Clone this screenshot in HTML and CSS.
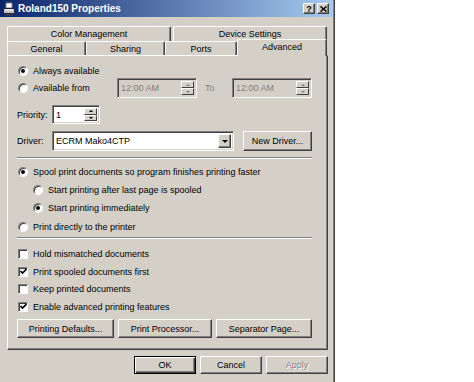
FILE: index.html
```html
<!DOCTYPE html>
<html lang="en">
<head>
  <meta charset="UTF-8">
  <meta name="viewport" content="width=device-width, initial-scale=1.0">
  <title>Roland150 Properties</title>
  <link rel="stylesheet" href="styles.css">
</head>
<body>

<div class="window">
  <div class="titlebar">
    <svg class="app-icon" width="14" height="14" viewBox="0 0 14 14">
      <path d="M4 1 L10 1 L10 6 L4 6 Z" fill="#fff" stroke="#808080" stroke-width="1"/>
      <path d="M1.5 6.5 L12.5 6.5 L12.5 11.5 L1.5 11.5 Z" fill="#c0c0c0" stroke="#202040" stroke-width="1"/>
      <path d="M3 12 L11 12 L11 13.5 L3 13.5 Z" fill="#404040"/>
      <path d="M3 8 L11 8" stroke="#fff" stroke-width="1"/>
    </svg>
    <span class="title">Roland150 Properties</span>
    <div class="caption-buttons">
      <span class="caption-btn">?</span>
      <span class="caption-btn">
        <svg width="7" height="6" viewBox="0 0 7 6"><path d="M0.5 0.5 L6.5 5.5 M6.5 0.5 L0.5 5.5" stroke="#000" stroke-width="1.5"/></svg>
      </span>
    </div>
  </div>

  <div class="dialog">
    <div class="tabs">
      <div class="tab-row back-row">
        <div class="tab tab-color">Color Management</div>
        <div class="tab tab-device">Device Settings</div>
      </div>
      <div class="tab-row front-row">
        <div class="tab tab-general">General</div>
        <div class="tab tab-sharing">Sharing</div>
        <div class="tab tab-ports">Ports</div>
        <div class="tab tab-advanced active">Advanced</div>
      </div>
    </div>

    <div class="panel">
      <div class="row row-always">
        <span class="radio checked"></span>
        <span>Always available</span>
      </div>

      <div class="row row-from">
        <div class="from-label">
          <span class="radio"></span>
          <span>Available from</span>
        </div>
        <div class="field time disabled">
          <span class="field-text">12:00 AM</span>
          <span class="spinner"><span class="spin up"></span><span class="spin down"></span></span>
        </div>
        <span class="to-label">To</span>
        <div class="field time disabled">
          <span class="field-text">12:00 AM</span>
          <span class="spinner"><span class="spin up"></span><span class="spin down"></span></span>
        </div>
      </div>

      <div class="row row-priority">
        <span class="field-label">Priority:</span>
        <div class="field priority">
          <span class="field-text">1</span>
          <span class="spinner"><span class="spin up"></span><span class="spin down"></span></span>
        </div>
      </div>

      <div class="row row-driver">
        <span class="field-label">Driver:</span>
        <div class="field combo">
          <span class="field-text">ECRM Mako4CTP</span>
          <span class="combo-btn"><span class="arrow-down"></span></span>
        </div>
        <button class="btn new-driver">New Driver...</button>
      </div>

      <div class="separator sep-top"></div>

      <div class="row spool">
        <span class="radio checked"></span>
        <span>Spool print documents so program finishes printing faster</span>
      </div>
      <div class="row spool sub">
        <span class="radio"></span>
        <span>Start printing after last page is spooled</span>
      </div>
      <div class="row spool sub">
        <span class="radio checked"></span>
        <span>Start printing immediately</span>
      </div>
      <div class="row spool direct">
        <span class="radio"></span>
        <span>Print directly to the printer</span>
      </div>

      <div class="separator sep-bottom"></div>

      <div class="checks">
        <div class="row check-row">
          <span class="checkbox"></span>
          <span>Hold mismatched documents</span>
        </div>
        <div class="row check-row">
          <span class="checkbox checked">
            <svg width="7" height="7" viewBox="0 0 7 7"><path d="M0.5 3 L2.5 5 L6.5 1" fill="none" stroke="#000" stroke-width="1.6"/></svg>
          </span>
          <span>Print spooled documents first</span>
        </div>
        <div class="row check-row">
          <span class="checkbox"></span>
          <span>Keep printed documents</span>
        </div>
        <div class="row check-row">
          <span class="checkbox checked">
            <svg width="7" height="7" viewBox="0 0 7 7"><path d="M0.5 3 L2.5 5 L6.5 1" fill="none" stroke="#000" stroke-width="1.6"/></svg>
          </span>
          <span>Enable advanced printing features</span>
        </div>
      </div>

      <div class="panel-buttons">
        <button class="btn btn-defaults">Printing Defaults...</button>
        <button class="btn btn-processor">Print Processor...</button>
        <button class="btn btn-separator">Separator Page...</button>
      </div>
    </div>

    <div class="footer">
      <button class="btn btn-footer default">OK</button>
      <button class="btn btn-footer">Cancel</button>
      <button class="btn btn-footer" disabled>Apply</button>
    </div>
  </div>
</div>

</body>
</html>
```

FILE: styles.css
```css
body {
  margin: 0;
  overflow: hidden;
  background-color: #fff;
  font-family: 'Liberation Sans', Arial, sans-serif;
  font-size: 9px;
  color: #000;
}

.window {
  width: 335px;
  height: 382px;
  box-sizing: border-box;
  background-color: #d4d0c8;
  border-right: 1px solid #404040;
  box-shadow: inset -1px 0 0 #808080;
}

/* title bar */
.titlebar {
  height: 17px;
  width: 333px;
  display: flex;
  align-items: center;
  background: linear-gradient(to right, #0a246a, #a6caf0);
  color: #fff;
}

.app-icon {
  margin-left: 2px;
  margin-right: 2px;
  flex: none;
}

.title {
  font-weight: bold;
  font-size: 10px;
  flex: 1;
}

.caption-buttons {
  display: flex;
  gap: 2px;
  margin-right: 4px;
}

.caption-btn {
  width: 12px;
  height: 11px;
  box-sizing: border-box;
  display: flex;
  align-items: center;
  justify-content: center;
  background-color: #d4d0c8;
  color: #000;
  font-weight: bold;
  font-size: 9px;
  border: 1px solid;
  border-color: #fff #404040 #404040 #fff;
  box-shadow: inset -1px -1px 0 #808080;
}

/* dialog */
.dialog {
  padding-left: 7px;
}

.tabs {
  width: 321px;
  padding-top: 9px;
}

.tab-row {
  display: flex;
  align-items: flex-start;
}

.back-row {
  height: 15px;
  gap: 2px;
}

.front-row {
  height: 14px;
}

.tab {
  box-sizing: border-box;
  display: flex;
  justify-content: center;
  align-items: center;
  background-color: #d4d0c8;
  border-top: 1px solid #fff;
  border-left: 1px solid #fff;
  border-right: 1px solid #404040;
  box-shadow: inset -1px 0 0 #808080;
  border-radius: 2px 2px 0 0;
}

.back-row .tab {
  height: 15px;
}

.front-row .tab {
  height: 14px;
  padding-top: 1px;
}

.tab-color { width: 164px; }
.tab-device { width: 154px; }
.tab-general { width: 79px; }
.tab-sharing { width: 79px; }
.tab-ports { width: 72px; }

.tab-advanced {
  width: 90px;
}

.front-row .tab.active {
  height: 17px;
  margin-top: -2px;
  padding-top: 0;
  padding-bottom: 3px;
  position: relative;
  z-index: 1;
}

.panel {
  width: 321px;
  height: 295px;
  box-sizing: border-box;
  border-top: 1px solid #fff;
  border-left: 1px solid #fff;
  border-right: 1px solid #404040;
  border-bottom: 1px solid #404040;
  box-shadow: inset -1px -1px 0 #808080;
  padding: 7px 0 0 9px;
}

.row {
  display: flex;
  align-items: center;
  white-space: nowrap;
}

.row-always {
  height: 15px;
}

.row-from {
  height: 20px;
}

.from-label {
  width: 100px;
  display: flex;
  align-items: center;
}

.to-label {
  width: 27px;
  margin-left: 8px;
  color: #808080;
}

.row-priority {
  height: 19px;
  margin-top: 7px;
}

.row-driver {
  height: 20px;
  margin-top: 7px;
}

.field-label {
  width: 35px;
}

/* radio and checkbox */
.radio {
  width: 10px;
  height: 10px;
  box-sizing: border-box;
  margin-left: 1px;
  margin-right: 5px;
  border-radius: 50%;
  background-color: #fff;
  border: 1px solid;
  border-color: #808080 #fff #fff #808080;
  box-shadow: inset 1px 1px 0 #404040;
  display: flex;
  align-items: center;
  justify-content: center;
  flex: none;
}

.radio.checked::after {
  content: "";
  width: 4px;
  height: 4px;
  border-radius: 50%;
  background-color: #000;
}

.checkbox {
  width: 10px;
  height: 10px;
  box-sizing: border-box;
  margin-left: 1px;
  margin-right: 5px;
  background-color: #fff;
  border: 1px solid;
  border-color: #808080 #fff #fff #808080;
  box-shadow: inset 1px 1px 0 #404040;
  display: flex;
  align-items: center;
  justify-content: center;
  flex: none;
}

/* edit fields */
.field {
  height: 100%;
  box-sizing: border-box;
  display: flex;
  align-items: center;
  background-color: #fff;
  border: 1px solid;
  border-color: #808080 #fff #fff #808080;
  box-shadow: inset 1px 1px 0 #404040, inset -1px -1px 0 #d4d0c8;
  padding: 2px 2px 2px 3px;
}

.field-text {
  flex: 1;
}

.field.disabled {
  background-color: #d4d0c8;
  color: #808080;
}

.time {
  width: 80px;
}

.priority {
  width: 48px;
}

.combo {
  width: 182px;
}

.spinner {
  width: 13px;
  height: 100%;
  display: flex;
  flex-direction: column;
}

.spin {
  flex: 1;
  box-sizing: border-box;
  background-color: #d4d0c8;
  border: 1px solid;
  border-color: #fff #404040 #404040 #fff;
  display: flex;
  align-items: center;
  justify-content: center;
}

.spin::after {
  content: "";
  border-left: 2px solid transparent;
  border-right: 2px solid transparent;
}

.spin.up::after {
  border-bottom: 2px solid #000;
}

.spin.down::after {
  border-top: 2px solid #000;
}

.disabled .spin::after {
  border-top-color: #808080;
  border-bottom-color: #808080;
}

.disabled .spin.up::after {
  border-top-color: transparent;
}

.disabled .spin.down::after {
  border-bottom-color: transparent;
}

.combo-btn {
  width: 13px;
  height: 100%;
  box-sizing: border-box;
  background-color: #d4d0c8;
  border: 1px solid;
  border-color: #fff #404040 #404040 #fff;
  box-shadow: inset -1px -1px 0 #808080;
  display: flex;
  align-items: center;
  justify-content: center;
}

.arrow-down {
  border-left: 3px solid transparent;
  border-right: 3px solid transparent;
  border-top: 3px solid #000;
}

/* buttons */
.btn {
  font-family: inherit;
  font-size: 9px;
  color: #000;
  background-color: #d4d0c8;
  box-sizing: border-box;
  padding: 0;
  border: 1px solid;
  border-color: #fff #404040 #404040 #fff;
  box-shadow: inset -1px -1px 0 #808080;
  border-radius: 0;
}

.btn:disabled {
  color: #808080;
  text-shadow: 1px 1px 0 #fff;
}

.new-driver {
  width: 69px;
  height: 20px;
  margin-left: 9px;
}

.separator {
  width: 295px;
  height: 2px;
  box-sizing: border-box;
  border-top: 1px solid #808080;
  border-bottom: 1px solid #fff;
}

.sep-top {
  margin-top: 6px;
}

.sep-bottom {
  margin-top: 1px;
}

.spool {
  height: 18px;
}

.spool:first-of-type {
  margin-top: 4px;
}

.sep-top + .spool {
  margin-top: 4px;
}

.spool.sub {
  padding-left: 15px;
}

.spool.direct {
  margin-top: 1px;
}

.checks {
  margin-top: 6.5px;
}

.check-row {
  height: 17.5px;
}

.panel-buttons {
  display: flex;
  margin-top: 3.5px;
}

.panel-buttons .btn {
  height: 19px;
}

.btn-defaults { width: 97px; }
.btn-processor { width: 94px; margin-left: 4px; }
.btn-separator { width: 96px; margin-left: 4px; }

.footer {
  width: 321px;
  display: flex;
  justify-content: flex-end;
  gap: 4px;
  margin-top: 6px;
}

.btn-footer {
  width: 62px;
  height: 18px;
}

.btn.default {
  border: 1px solid #000;
  box-shadow: inset 1px 1px 0 #fff, inset -1px -1px 0 #404040, inset -2px -2px 0 #808080;
}
```
